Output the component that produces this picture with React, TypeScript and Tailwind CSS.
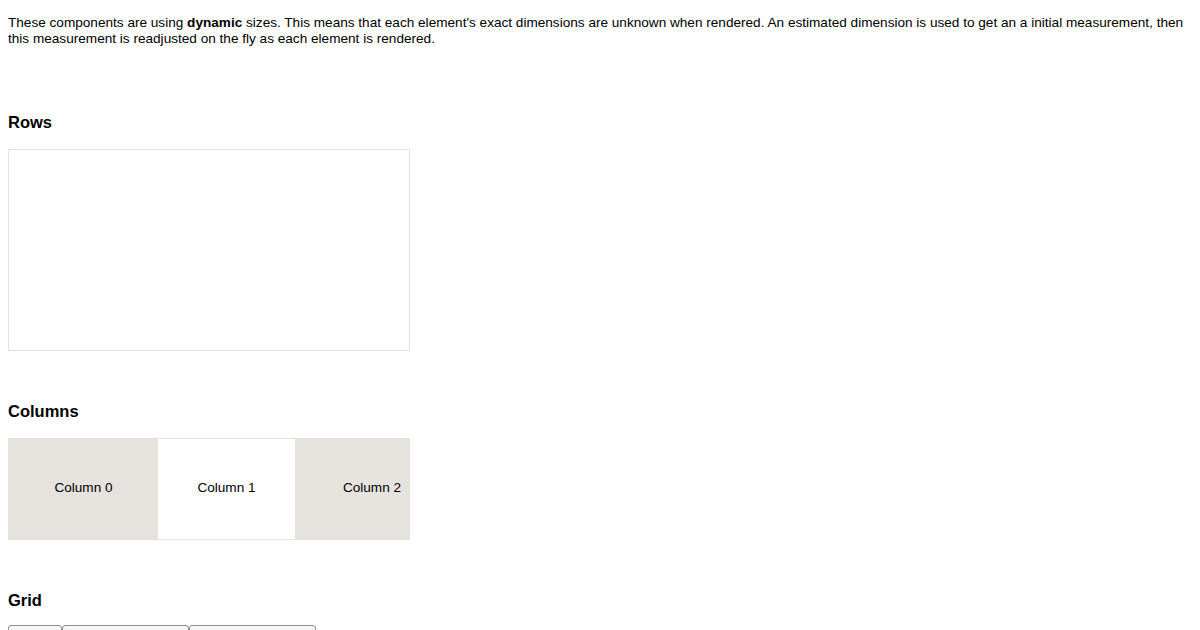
const columns = [
  { label: "Column 0", width: 149, shaded: true },
  { label: "Column 1", width: 137, shaded: false },
  { label: "Column 2", width: 154, shaded: true },
];

const gridCells = [54, 127, 127];

export default function App() {
  return (
    <div className="min-h-[630px] bg-white px-2 pt-[15px] text-[13.6px] leading-[16px] text-black font-['Liberation_Sans',Arial,sans-serif]">
      <p>
        These components are using <strong>dynamic</strong> sizes. This means that each element's exact dimensions are
        unknown when rendered. An estimated dimension is used to get an a initial measurement, then this measurement is
        readjusted on the fly as each element is rendered.
      </p>

      <h4 className="mt-[66px] mb-[17px] text-[16.5px] leading-[19px] font-bold">Rows</h4>
      <div className="h-[202px] w-[402px] overflow-auto border border-[#e6e3de] bg-white" />

      <h4 className="mt-[51px] mb-[17px] text-[16.5px] leading-[19px] font-bold">Columns</h4>
      <div className="flex h-[102px] w-[402px] overflow-hidden border border-[#e6e3de]">
        {columns.map((c) => (
          <div
            key={c.label}
            style={{ width: c.width }}
            className={`flex shrink-0 items-center justify-center pb-[2px] ${c.shaded ? "bg-[#e6e3de]" : "bg-white"}`}
          >
            {c.label}
          </div>
        ))}
      </div>

      <h4 className="mt-[51px] mb-[15px] text-[16.5px] leading-[19px] font-bold">Grid</h4>
      <div className="flex">
        {gridCells.map((w, i) => (
          <div
            key={i}
            style={{ width: w }}
            className="h-[40px] shrink-0 rounded-[3px] border border-[#8f8f8f] bg-[#f7f7f7]"
          />
        ))}
      </div>
    </div>
  );
}
